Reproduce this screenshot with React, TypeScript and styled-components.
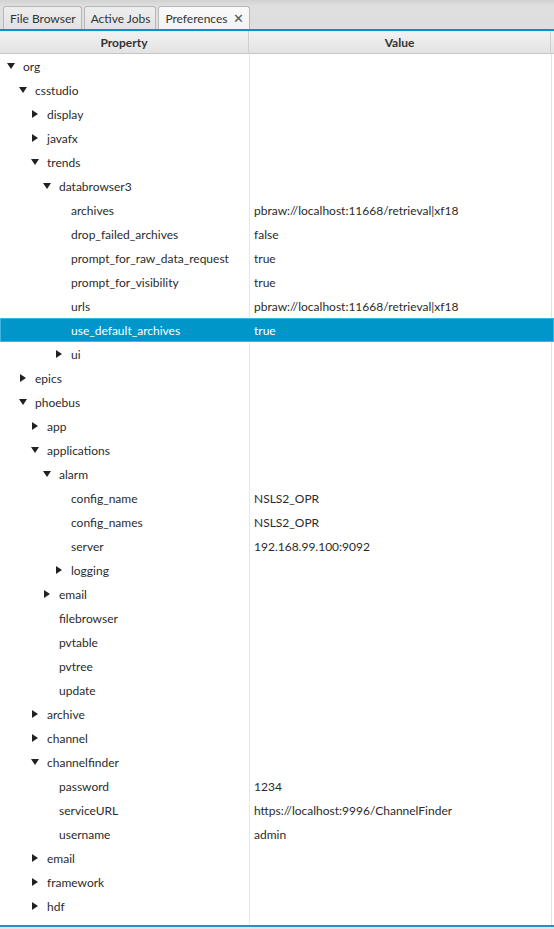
import React from "react";
import styled, { createGlobalStyle } from "styled-components";

const Global = createGlobalStyle`
  html, body { margin: 0; padding: 0; background: #ffffff; }
  body { font-family: "Lato", "Open Sans", sans-serif; font-size: 12px; color: #2b2b2b; }
`;

type Node = { name: string; value?: string; open?: boolean; leaf?: boolean; children?: Node[]; selected?: boolean };

const tree: Node[] = [
  {
    name: "org", open: true, children: [
      {
        name: "csstudio", open: true, children: [
          { name: "display" },
          { name: "javafx" },
          {
            name: "trends", open: true, children: [
              {
                name: "databrowser3", open: true, children: [
                  { name: "archives", leaf: true, value: "pbraw://localhost:11668/retrieval|xf18" },
                  { name: "drop_failed_archives", leaf: true, value: "false" },
                  { name: "prompt_for_raw_data_request", leaf: true, value: "true" },
                  { name: "prompt_for_visibility", leaf: true, value: "true" },
                  { name: "urls", leaf: true, value: "pbraw://localhost:11668/retrieval|xf18" },
                  { name: "use_default_archives", leaf: true, value: "true", selected: true },
                  { name: "ui" },
                ],
              },
            ],
          },
        ],
      },
      { name: "epics" },
      {
        name: "phoebus", open: true, children: [
          { name: "app" },
          {
            name: "applications", open: true, children: [
              {
                name: "alarm", open: true, children: [
                  { name: "config_name", leaf: true, value: "NSLS2_OPR" },
                  { name: "config_names", leaf: true, value: "NSLS2_OPR" },
                  { name: "server", leaf: true, value: "192.168.99.100:9092" },
                  { name: "logging" },
                ],
              },
              { name: "email" },
              { name: "filebrowser", leaf: true },
              { name: "pvtable", leaf: true },
              { name: "pvtree", leaf: true },
              { name: "update", leaf: true },
            ],
          },
          { name: "archive" },
          { name: "channel" },
          {
            name: "channelfinder", open: true, children: [
              { name: "password", leaf: true, value: "1234" },
              { name: "serviceURL", leaf: true, value: "https://localhost:9996/ChannelFinder" },
              { name: "username", leaf: true, value: "admin" },
            ],
          },
          { name: "email" },
          { name: "framework" },
          { name: "hdf" },
        ],
      },
    ],
  },
];

type Flat = { node: Node; level: number };
const flatten = (nodes: Node[], level: number, out: Flat[]) => {
  nodes.forEach((n) => {
    out.push({ node: n, level });
    if (n.open && n.children) flatten(n.children, level + 1, out);
  });
  return out;
};
const rows = flatten(tree, 0, []);

const Page = styled.div`
  width: 554px;
  height: 929px;
  display: flex;
  flex-direction: column;
  background: #e4e4e4;
  overflow: hidden;
`;

const TabBar = styled.div`
  height: 31px;
  flex: none;
  display: flex;
  align-items: flex-end;
  gap: 2px;
  padding-left: 3px;
  background: linear-gradient(#d2d2d2, #dfdfdf 6px, #dedede);
  border-bottom: 2px solid #0096c9;
  box-sizing: border-box;
`;

const Tab = styled.div<{ $active?: boolean }>`
  height: 23px;
  display: flex;
  align-items: center;
  gap: 5px;
  padding: 1px 5px 0 6px;
  box-sizing: border-box;
  border: 1px solid #b8b8b8;
  border-bottom: none;
  border-radius: 3px 3px 0 0;
  background: ${(p) => (p.$active ? "linear-gradient(#fafafa, #f2f2f2)" : "linear-gradient(#eeeeee, #e2e2e2)")};
  font-size: 12px;
  color: #333;
`;

const Close = styled.span`
  font-size: 13px;
  line-height: 1;
  color: #555;
`;

const Table = styled.div`
  flex: 1;
  display: flex;
  flex-direction: column;
  background: #ffffff;
  border-bottom: 2px solid #2a8fc0;
  margin-bottom: 2px;
  min-height: 0;
`;

const Header = styled.div`
  height: 23px;
  flex: none;
  display: grid;
  grid-template-columns: 249px 302px 3px;
  background: linear-gradient(#f2f2f2, #e3e3e3);
  border-bottom: 1px solid #c6c6c6;
  box-sizing: border-box;
`;

const HeaderCell = styled.div`
  display: flex;
  align-items: center;
  justify-content: center;
  font-weight: 700;
  font-size: 12px;
  color: #333;
  border-right: 1px solid #cfcfcf;
`;

const Body = styled.div`
  flex: 1;
  display: flex;
  flex-direction: column;
  overflow: hidden;
  background: linear-gradient(to right, transparent 249px, #e8e8e8 249px, #e8e8e8 250px, transparent 250px, transparent 551px, #e2e2e2 551px, #e2e2e2 552px, transparent 552px);
`;

const Row = styled.div<{ $selected?: boolean }>`
  height: 24px;
  flex: none;
  display: grid;
  grid-template-columns: 250px 301px;
  box-sizing: border-box;
  ${(p) =>
    p.$selected
      ? `background: #0096c9; color: #ffffff; box-shadow: inset 0 0 0 1px #3eb6e0;`
      : `color: #2b2b2b;`}
`;

const NameCell = styled.div<{ $level: number }>`
  display: flex;
  align-items: center;
  padding-left: ${(p) => 7 + p.$level * 12}px;
  white-space: nowrap;
`;

const Arrow = styled.span`
  width: 16px;
  flex: none;
  display: flex;
  align-items: center;
`;

const ValueCell = styled.div`
  display: flex;
  align-items: center;
  padding-left: 4px;
  white-space: nowrap;
`;

const Tri = ({ open }: { open?: boolean }) =>
  open ? (
    <svg width="8" height="8" viewBox="0 0 8 8">
      <path d="M0 1 L8 1 L4 7 Z" fill="#222" />
    </svg>
  ) : (
    <svg width="8" height="8" viewBox="0 0 8 8">
      <path d="M1 0 L7 4 L1 8 Z" fill="#222" />
    </svg>
  );

export default function App() {
  return (
    <Page>
      <Global />
      <TabBar>
        <Tab>File Browser</Tab>
        <Tab>Active Jobs</Tab>
        <Tab $active>
          Preferences <Close>✕</Close>
        </Tab>
      </TabBar>
      <Table>
        <Header>
          <HeaderCell>Property</HeaderCell>
          <HeaderCell>Value</HeaderCell>
          <div />
        </Header>
        <Body>
          {rows.map((r, i) => (
            <Row key={i} $selected={r.node.selected}>
              <NameCell $level={r.level}>
                <Arrow>{r.node.leaf ? null : <Tri open={r.node.open} />}</Arrow>
                {r.node.name}
              </NameCell>
              <ValueCell>{r.node.value ?? ""}</ValueCell>
            </Row>
          ))}
        </Body>
      </Table>
    </Page>
  );
}
